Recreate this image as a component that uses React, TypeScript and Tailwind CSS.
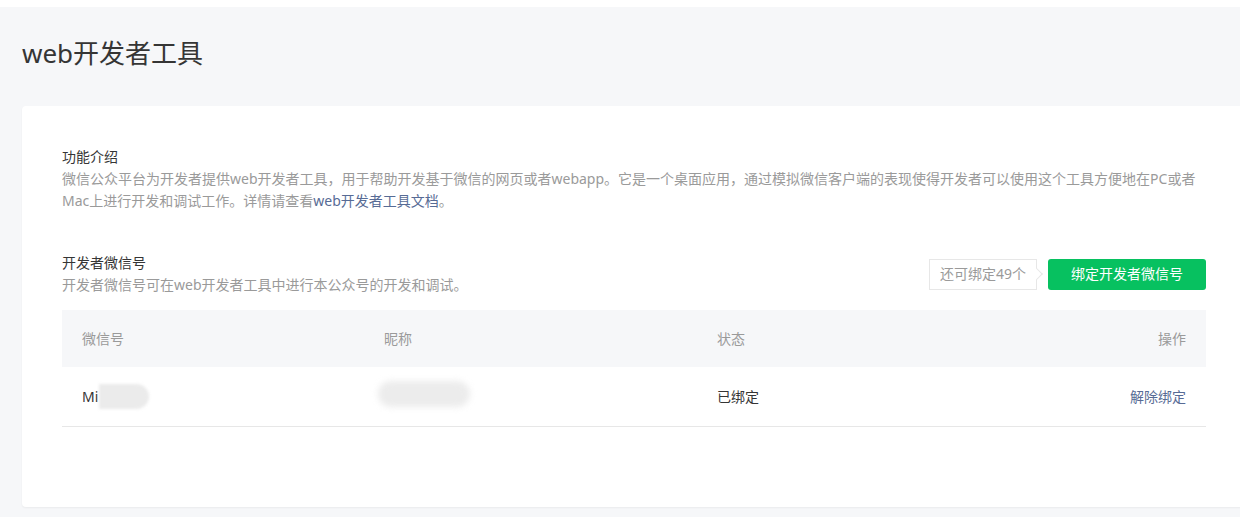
const font = "font-['Noto_Sans','Noto_Sans_CJK_SC',sans-serif]";

const columns = [
  { key: "wx", label: "微信号", className: "w-[302px] pl-[20px]" },
  { key: "nick", label: "昵称", className: "w-[333px] pl-[20px]" },
  { key: "status", label: "状态", className: "flex-1 pl-[20px]" },
  { key: "op", label: "操作", className: "pr-[20px] text-right" },
];

const BindTable = () => (
  <div className="mt-[14px] text-[14px] leading-[22px]">
    {/* header */}
    <div className="flex h-[57px] items-center bg-[#f6f7f9] text-[#9a9a9a]">
      {columns.map((c) => (
        <div key={c.key} className={c.className}>
          {c.label}
        </div>
      ))}
    </div>

    {/* single bound row, account info is masked */}
    <div className="flex h-[60px] items-center border-b border-[#e7e7e7]">
      <div className={columns[0].className}>
        <span className="inline-flex items-center text-[#353535]">
          Mi
          <span className="ml-[1px] inline-block h-[25px] w-[50px] rounded-r-full bg-[#ebebeb] blur-[1.5px]" />
        </span>
      </div>
      <div className={columns[1].className}>
        <span className="inline-flex items-center">
          <span className="-ml-[6px] inline-block h-[26px] w-[92px] rounded-full bg-[#ececec] blur-[3px]" />
        </span>
      </div>
      <div className={`${columns[2].className} text-[#353535]`}>已绑定</div>
      <div className={columns[3].className}>
        <a className="cursor-pointer text-[#576b95]">解除绑定</a>
      </div>
    </div>
  </div>
);

export default function App() {
  return (
    <div
      className={`min-h-screen w-full overflow-hidden border-t-[7px] border-white bg-[#f6f7f9] ${font}`}
    >
      <div className="px-[22px]">
        <h1 className="mt-[26px] mb-[33px] text-[26px] leading-[40px] font-normal text-[#353535]">
          web开发者工具
        </h1>

        <div className="w-[1224px] rounded-[4px] bg-white px-[40px] pt-[40px] pb-[80px] shadow-[0_1px_2px_rgba(0,0,0,0.05)]">
          {/* 功能介绍 */}
          <div className="text-[14px] leading-[22px]">
            <p className="text-[#353535]">功能介绍</p>
            <p className="text-[#9a9a9a]">
              微信公众平台为开发者提供web开发者工具，用于帮助开发基于微信的网页或者webapp。它是一个桌面应用，通过模拟微信客户端的表现使得开发者可以使用这个工具方便地在PC或者
              <br />
              Mac上进行开发和调试工作。详情请查看
              <a className="cursor-pointer text-[#576b95]">web开发者工具文档</a>。
            </p>
          </div>

          {/* 开发者微信号 */}
          <div className="mt-[40px] flex items-center justify-between text-[14px] leading-[22px]">
            <div>
              <p className="text-[#353535]">开发者微信号</p>
              <p className="text-[#9a9a9a]">
                开发者微信号可在web开发者工具中进行本公众号的开发和调试。
              </p>
            </div>
            <div className="flex items-center gap-[11px]">
              <div className="relative flex h-[31px] w-[108px] items-center justify-center border border-[#e7e7e7] bg-white text-[#9a9a9a]">
                还可绑定49个
                <span className="absolute top-1/2 -right-[5px] h-[9px] w-[9px] -translate-y-1/2 rotate-45 border-t border-r border-[#e7e7e7] bg-white" />
              </div>
              <button className="flex h-[31px] w-[158px] items-center justify-center rounded-[3px] bg-[#07c160] text-white">
                绑定开发者微信号
              </button>
            </div>
          </div>

          <BindTable />
        </div>
      </div>
    </div>
  );
}
